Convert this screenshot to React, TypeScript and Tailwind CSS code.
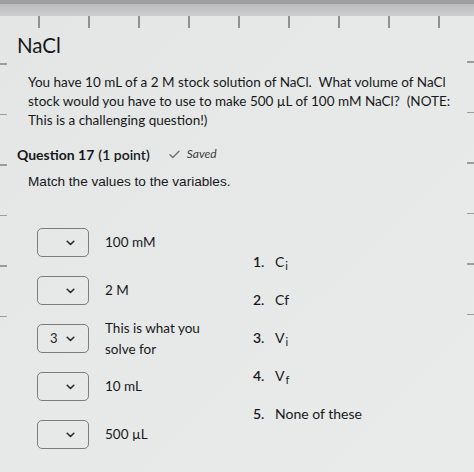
import React from 'react';

const Chevron: React.FC = () => (
  <svg width="9" height="6" viewBox="0 0 9 6" className="shrink-0">
    <path d="M1.2 1.3 L4.5 4.5 L7.8 1.3" fill="none" stroke="#2a2a2a" strokeWidth="1.6" strokeLinecap="round" strokeLinejoin="round" />
  </svg>
);

const Select: React.FC<{ value?: string }> = ({ value }) => (
  <div className="w-[52px] h-[29px] shrink-0 rounded-[5px] border-[1.5px] border-[#7b7d7e] flex items-center pl-[12px] pr-[13px]">
    <span className="text-[13px] text-[#222] flex-1">{value}</span>
    <Chevron />
  </div>
);

const App: React.FC = () => {
  const rows = [
    { value: '', label: '100 mM' },
    { value: '', label: '2 M' },
    { value: '3', label: 'This is what you solve for' },
    { value: '', label: '10 mL' },
    { value: '', label: '500 µL' },
  ];

  const vars = [
    { n: '1.', main: 'C', sub: 'i' },
    { n: '2.', main: 'Cf', sub: '' },
    { n: '3.', main: 'V', sub: 'i' },
    { n: '4.', main: 'V', sub: 'f' },
    { n: '5.', main: 'None of these', sub: '' },
  ];

  return (
    <div className="relative w-[474px] h-[472px] overflow-hidden bg-gradient-to-br from-[#e4e6e6] via-[#e7e9e9] to-[#e9eaea] text-[#17181a] font-['Lato','Noto_Sans',sans-serif]">
      {/* top bezel */}
      <div className="h-[4px] bg-[#9c9e9f]" />
      <div className="h-[12px] bg-gradient-to-b from-[#b9bbbc] to-[#cdd0d0]" />

      {/* ruler ticks */}
      <div className="flex pl-[38px] gap-[48px] h-[12px]">
        {Array.from({ length: 9 }).map((_, i) => (
          <div key={i} className="w-[2px] h-[12px] bg-[#8e9192]" />
        ))}
      </div>

      {/* edge marks */}
      <div className="absolute left-0 top-[63px] flex flex-col gap-[49px]">
        {Array.from({ length: 6 }).map((_, i) => (
          <div key={i} className="w-[7px] h-[1.5px] bg-[#9a9c9d]" />
        ))}
      </div>
      <div className="absolute right-0 top-[61px] flex flex-col gap-[49px]">
        {Array.from({ length: 6 }).map((_, i) => (
          <div key={i} className="w-[7px] h-[1.5px] bg-[#9a9c9d]" />
        ))}
      </div>

      <div className="pl-[17px] pr-[10px]">
        <h1 className="mt-[3px] text-[20.5px] leading-[28px] font-normal">NaCl</h1>

        <p className="mt-[14px] pl-[11px] text-[13.5px] leading-[19px] whitespace-pre">
          {'You have 10 mL of a 2 M stock solution of NaCl.  What volume of NaCl\nstock would you have to use to make 500 µL of 100 mM NaCl?  (NOTE:\nThis is a challenging question!)'}
        </p>

        <div className="mt-[14px] flex items-center h-[20px]">
          <span className="text-[14px] font-bold">Question 17</span>
          <span className="text-[14px] font-semibold ml-[4px]">(1 point)</span>
          <svg width="11" height="9" viewBox="0 0 11 9" className="ml-[19px] mt-[1px]">
            <path d="M1 4.8 L3.8 7.5 L10 1.2" fill="none" stroke="#6f7273" strokeWidth="1.4" strokeLinecap="round" strokeLinejoin="round" />
          </svg>
          <span className="ml-[7px] text-[12px] italic text-[#3a3b3c]">Saved</span>
        </div>

        <p className="mt-[8px] pl-[11px] text-[13.6px] leading-[20px] font-['Liberation_Sans',Arial,sans-serif]">
          Match the values to the variables.
        </p>

        <div className="flex mt-[36px]">
          <div className="flex flex-col gap-[19px] pl-[20px] w-[236px]">
            {rows.map((r, i) => (
              <div key={i} className="flex items-center gap-[16px] h-[29px]">
                <Select value={r.value} />
                <span className="text-[13.5px] leading-[21px] w-[112px]">{r.label}</span>
              </div>
            ))}
          </div>
          <ol className="mt-[24px] flex flex-col gap-[18px]">
            {vars.map((v, i) => (
              <li key={i} className="flex items-baseline text-[14px] leading-[20px]">
                <span className="w-[22px] font-semibold">{v.n}</span>
                <span>
                  {v.main}
                  {v.sub && <sub className="text-[11px] ml-[1px]">{v.sub}</sub>}
                </span>
              </li>
            ))}
          </ol>
        </div>
      </div>
    </div>
  );
};

export default App;
